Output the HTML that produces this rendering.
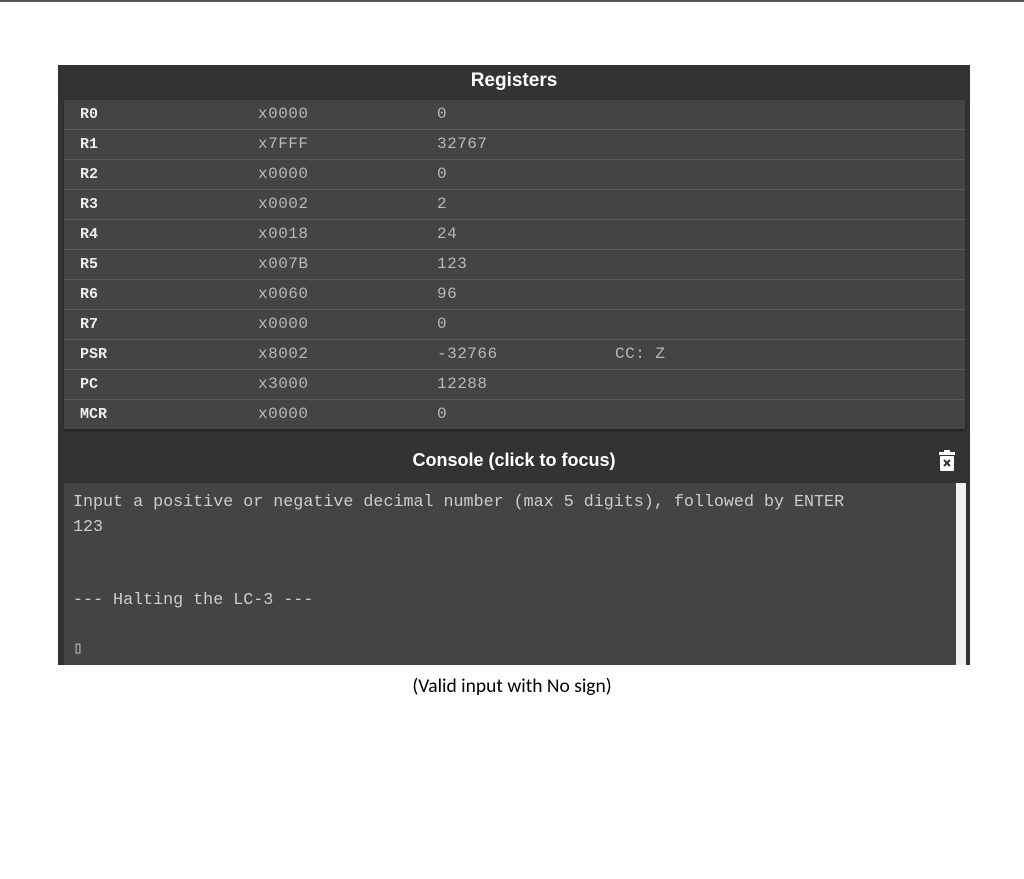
<!DOCTYPE html>
<html><head><style>
body{margin:0;width:1024px;height:879px;background:#fff;position:relative;overflow:hidden;font-family:"Liberation Sans",sans-serif}
.top{position:absolute;left:0;top:0;width:1024px;height:2px;background:#555}
.panel{position:absolute;left:58px;top:65px;width:912px;height:600px;background:#333}
.h{position:absolute;left:0;width:912px;text-align:center;color:#fff;font-weight:bold;font-size:19px}
table{position:absolute;left:6px;top:35px;width:901px;border-collapse:collapse;background:#444;box-shadow:0 2px 3px #222;table-layout:fixed}
td{height:29px;border-bottom:1px solid #5a5a5a;font-family:"Liberation Mono",monospace;font-size:16px;letter-spacing:0.5px;color:#b8b8b8;padding:0;line-height:29px}
td.n{font-weight:bold;color:#eee;padding-left:16px;font-size:15px;letter-spacing:0}
tr:last-child td{border-bottom:none}
.con{position:absolute;left:6px;top:418px;width:892px;height:182px;background:#444;font-family:"Liberation Mono",monospace;font-size:16.7px;color:#ccc;line-height:24.5px;padding:8px 0 0 9px;box-sizing:border-box;white-space:pre}
.sb{position:absolute;left:898px;top:418px;width:10px;height:182px;background:#f0f0f0}
.cap{position:absolute;left:0;width:1024px;top:674px;text-align:center;font-size:19.5px;color:#000;font-family:"Carlito","Liberation Sans",sans-serif}
</style></head><body>
<div class="top"></div>
<div class="panel">
<div class="h" style="top:5px">Registers</div>
<table>
<colgroup><col style="width:194px"><col style="width:179px"><col style="width:178px"><col></colgroup>
<tr><td class="n">R0</td><td>x0000</td><td>0</td><td></td></tr>
<tr><td class="n">R1</td><td>x7FFF</td><td>32767</td><td></td></tr>
<tr><td class="n">R2</td><td>x0000</td><td>0</td><td></td></tr>
<tr><td class="n">R3</td><td>x0002</td><td>2</td><td></td></tr>
<tr><td class="n">R4</td><td>x0018</td><td>24</td><td></td></tr>
<tr><td class="n">R5</td><td>x007B</td><td>123</td><td></td></tr>
<tr><td class="n">R6</td><td>x0060</td><td>96</td><td></td></tr>
<tr><td class="n">R7</td><td>x0000</td><td>0</td><td></td></tr>
<tr><td class="n">PSR</td><td>x8002</td><td>-32766</td><td>CC: Z</td></tr>
<tr><td class="n">PC</td><td>x3000</td><td>12288</td><td></td></tr>
<tr><td class="n">MCR</td><td>x0000</td><td>0</td><td></td></tr>
</table>
<div class="h" style="top:385px;font-size:18px">Console (click to focus)</div>
<svg style="position:absolute;left:880px;top:385px" width="18" height="22" viewBox="0 0 18 22"><rect x="6" y="0" width="6" height="2" fill="#fff"/><rect x="1" y="2" width="16" height="3" fill="#fff"/><rect x="2" y="6" width="14" height="15" rx="1" fill="#fff"/><path d="M6 10l6 6M12 10l-6 6" stroke="#333" stroke-width="2"/></svg>
<div class="con">Input a positive or negative decimal number (max 5 digits), followed by ENTER
123


--- Halting the LC-3 ---

▯</div>
<div class="sb"></div>
</div>
<div class="cap">(Valid input with No sign)</div>
</body></html>
